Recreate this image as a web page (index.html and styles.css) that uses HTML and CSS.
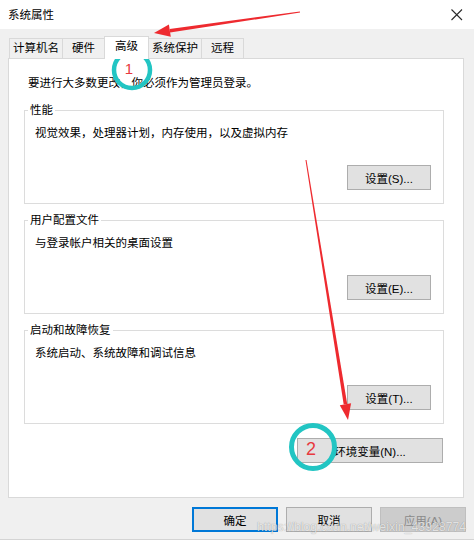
FILE: index.html
```html
<!DOCTYPE html>
<html lang="zh-CN">
<head>
  <meta charset="UTF-8">
  <meta name="viewport" content="width=device-width, initial-scale=1.0">
  <title>系统属性</title>
  <link rel="stylesheet" href="styles.css">
</head>
<body>
  <div class="window">
    <div class="titlebar">
      <span class="title">系统属性</span>
      <svg class="close" width="12" height="12" viewBox="0 0 12 12">
        <path d="M0.5 0.5 L11 11 M11 0.5 L0.5 11" stroke="#2b2b2b" stroke-width="1.1" fill="none"/>
      </svg>
    </div>

    <div class="client">
      <div class="tabs">
        <div class="tab">计算机名</div>
        <div class="tab">硬件</div>
        <div class="tab active">高级</div>
        <div class="tab">系统保护</div>
        <div class="tab">远程</div>
      </div>

      <div class="panel">
        <p class="note">要进行大多数更改，你必须作为管理员登录。</p>

        <fieldset class="group">
          <legend>性能</legend>
          <p class="desc">视觉效果，处理器计划，内存使用，以及虚拟内存</p>
          <div class="actions"><button class="btn">设置(S)...</button></div>
        </fieldset>

        <fieldset class="group">
          <legend>用户配置文件</legend>
          <p class="desc">与登录帐户相关的桌面设置</p>
          <div class="actions"><button class="btn">设置(E)...</button></div>
        </fieldset>

        <fieldset class="group">
          <legend>启动和故障恢复</legend>
          <p class="desc">系统启动、系统故障和调试信息</p>
          <div class="actions"><button class="btn">设置(T)...</button></div>
        </fieldset>

        <div class="actions env">
          <button class="btn wide">环境变量(N)...</button>
        </div>
      </div>

      <div class="footer">
        <button class="btn default">确定</button>
        <button class="btn">取消</button>
        <button class="btn" disabled>应用(A)</button>
      </div>
    </div>

    <!-- annotation layer drawn over the dialog -->
    <svg class="marks" width="474" height="542" viewBox="0 0 474 542">
      <polygon points="299.9,11.4 300.1,12.6 170.1,32.5 169.6,28.9" fill="#ee2a2f"/>
      <polygon points="154,33 168.9,24.6 170.8,36.8" fill="#ee2a2f"/>
      <polygon points="305.5,160.1 306.5,159.9 347.2,403.9 343.7,404.5" fill="#ee2a2f"/>
      <polygon points="348,420 339.8,405.2 351.1,403.3" fill="#ee2a2f"/>

      <circle cx="132" cy="70" r="18" fill="none" stroke="#22c5c3" stroke-width="4.5"/>
      <text x="129" y="74" class="num one">1</text>
      <circle cx="313" cy="447" r="21.5" fill="none" stroke="#22c5c3" stroke-width="5"/>
      <text x="311" y="455" class="num two">2</text>
    </svg>

    <div class="watermark">https://blog.csdn.net/weixin_43928774</div>
  </div>
</body>
</html>
```

FILE: styles.css
```css
* {
  box-sizing: border-box;
}

body {
  margin: 0;
  background: #ffffff;
  font-family: 'Liberation Sans', 'Noto Sans CJK SC', sans-serif;
  font-size: 11.5px;
  color: #000;
}

.window {
  position: relative;
  width: 474px;
  height: 542px;
  overflow: hidden;
}

.titlebar {
  display: flex;
  align-items: center;
  justify-content: space-between;
  height: 29px;
  padding: 0 11px 0 8px;
  background: #ffffff;
}

.title {
  font-size: 11.5px;
  line-height: 16px;
}

.client {
  height: 511px;
  padding: 7px 8px 0 8px;
  background: #f0f0f0;
  border-bottom: 1px solid #d4d4d4;
}

/* tab strip */
.tabs {
  display: flex;
  height: 22px;
  padding: 2px 0 0 1px;
}

.tab {
  height: 20px;
  min-width: 43px;
  padding: 0 3px;
  margin-left: -1px;
  border: 1px solid #d9d9d9;
  border-bottom: none;
  background: #f0f0f0;
  line-height: 18px;
  text-align: center;
  white-space: nowrap;
}

.tab:first-child {
  margin-left: 0;
}

.tab.active {
  position: relative;
  z-index: 1;
  height: 23px;
  margin-top: -2px;
  min-width: 45px;
  background: #ffffff;
}

.panel {
  width: 456px;
  height: 440px;
  padding: 16px 19px 0 15px;
  border: 1px solid #d9d9d9;
  background: #ffffff;
}

.note {
  margin: 0 0 11px 4px;
  line-height: 16px;
}

.group {
  margin: 0 0 8px 0;
  padding: 7px 12px 13px 10px;
  border: 1px solid #dcdcdc;
  min-width: 0;
}

.group legend {
  margin-left: -7px;
  padding: 0 2px;
  line-height: 16px;
}

.desc {
  margin: 0;
  line-height: 16px;
}

.actions {
  display: flex;
  justify-content: flex-end;
  margin-top: 24px;
}

.actions.env {
  margin-top: 14px;
  margin-right: 1px;
}

.btn {
  width: 84px;
  height: 25px;
  padding: 0;
  border: 1px solid #adadad;
  background: #e1e1e1;
  font-family: inherit;
  font-size: 11.5px;
  color: #000;
}

.btn.wide {
  width: 146px;
}

.btn.default {
  border-color: #0078d7;
  box-shadow: inset 0 0 0 1px #0078d7;
}

.btn:disabled {
  border-color: #bfbfbf;
  background: #cccccc;
  color: #8a8a8a;
}

.footer {
  display: flex;
  justify-content: flex-end;
  gap: 8px;
  margin-top: 9px;
}

.footer .btn {
  width: 86px;
}

/* red arrows and numbered rings pasted on the screenshot */
.marks {
  position: absolute;
  top: 0;
  left: 0;
  pointer-events: none;
}

.num {
  fill: #e8393e;
  font-family: 'Liberation Sans', sans-serif;
  text-anchor: middle;
}

.num.one {
  font-size: 15px;
}

.num.two {
  font-size: 18px;
}

.watermark {
  position: absolute;
  left: 257px;
  top: 519px;
  font-family: 'Liberation Sans', sans-serif;
  font-size: 12.3px;
  line-height: 16px;
  color: rgba(255, 255, 255, 0.75);
  text-shadow: 0 0 1px rgba(0, 0, 0, 0.4);
  white-space: nowrap;
  pointer-events: none;
}
```
